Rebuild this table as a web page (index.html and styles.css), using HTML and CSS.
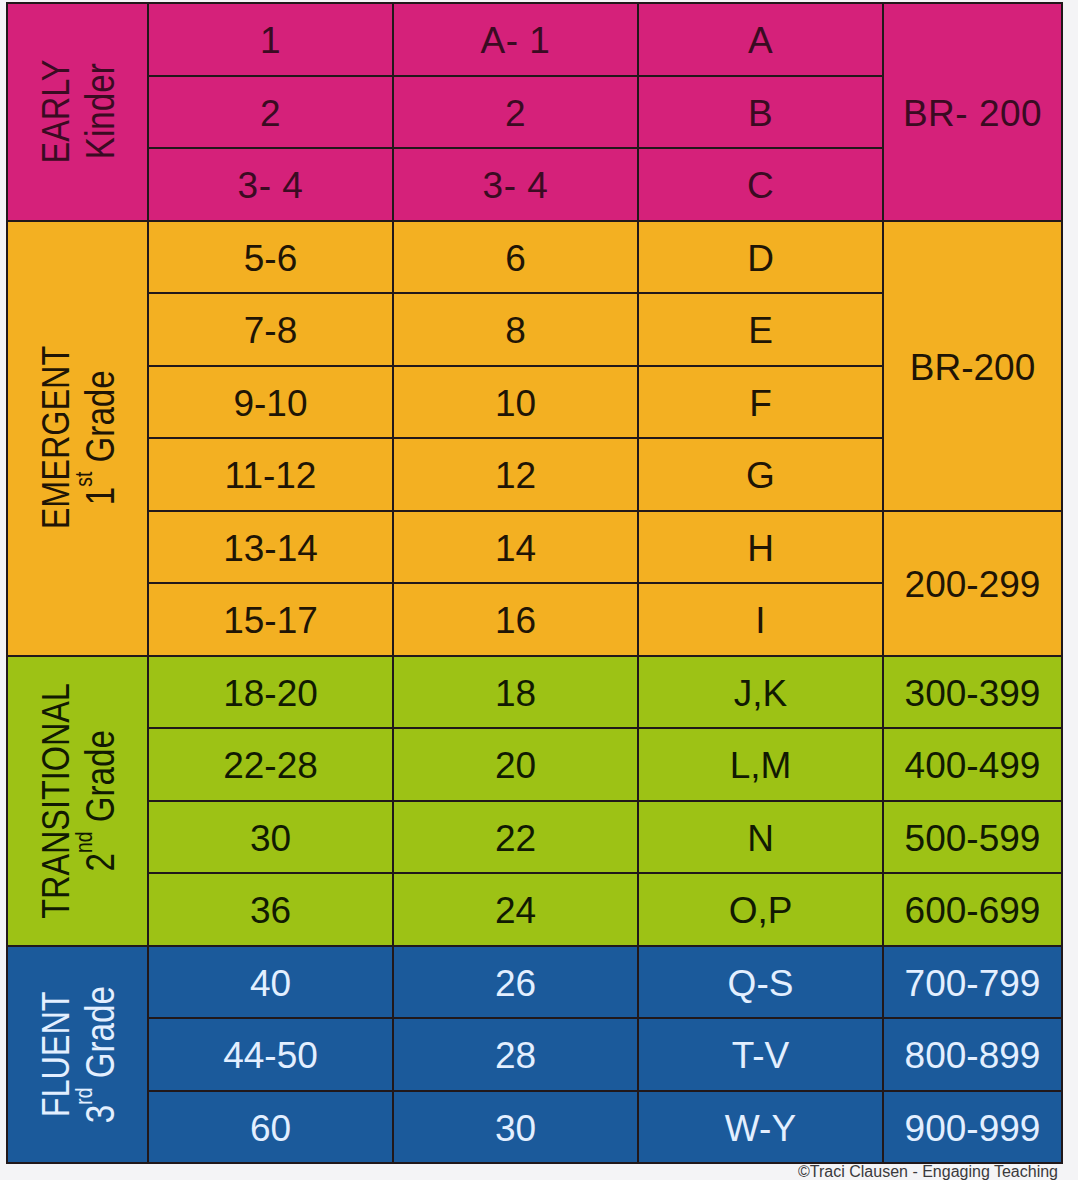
FILE: index.html
```html
<!DOCTYPE html>
<html lang="en">
<head>
<meta charset="utf-8">
<title>Reading Level Chart</title>
<link rel="stylesheet" href="styles.css">
</head>
<body>
<div class="chart">
  <div class="c label pink" style="grid-row: span 3"><div class="vt"><span class="main">EARLY</span><span class="sub">Kinder</span></div></div>
  <div class="c pink">1</div><div class="c pink">A- 1</div><div class="c pink">A</div>
  <div class="c pink" style="grid-row: span 3">BR- 200</div>
  <div class="c pink">2</div><div class="c pink">2</div><div class="c pink">B</div>
  <div class="c pink">3- 4</div><div class="c pink">3- 4</div><div class="c pink">C</div>

  <div class="c label orange" style="grid-row: span 6"><div class="vt"><span class="main">EMERGENT</span><span class="sub">1<sup>st</sup> Grade</span></div></div>
  <div class="c orange">5-6</div><div class="c orange">6</div><div class="c orange">D</div>
  <div class="c orange" style="grid-row: span 4">BR-200</div>
  <div class="c orange">7-8</div><div class="c orange">8</div><div class="c orange">E</div>
  <div class="c orange">9-10</div><div class="c orange">10</div><div class="c orange">F</div>
  <div class="c orange">11-12</div><div class="c orange">12</div><div class="c orange">G</div>
  <div class="c orange">13-14</div><div class="c orange">14</div><div class="c orange">H</div>
  <div class="c orange" style="grid-row: span 2">200-299</div>
  <div class="c orange">15-17</div><div class="c orange">16</div><div class="c orange">I</div>

  <div class="c label green" style="grid-row: span 4"><div class="vt"><span class="main">TRANSITIONAL</span><span class="sub">2<sup>nd</sup> Grade</span></div></div>
  <div class="c green">18-20</div><div class="c green">18</div><div class="c green">J,K</div><div class="c green">300-399</div>
  <div class="c green">22-28</div><div class="c green">20</div><div class="c green">L,M</div><div class="c green">400-499</div>
  <div class="c green">30</div><div class="c green">22</div><div class="c green">N</div><div class="c green">500-599</div>
  <div class="c green">36</div><div class="c green">24</div><div class="c green">O,P</div><div class="c green">600-699</div>

  <div class="c label blue" style="grid-row: span 3"><div class="vt"><span class="main">FLUENT</span><span class="sub">3<sup>rd</sup> Grade</span></div></div>
  <div class="c blue">40</div><div class="c blue">26</div><div class="c blue">Q-S</div><div class="c blue">700-799</div>
  <div class="c blue">44-50</div><div class="c blue">28</div><div class="c blue">T-V</div><div class="c blue">800-899</div>
  <div class="c blue">60</div><div class="c blue">30</div><div class="c blue">W-Y</div><div class="c blue">900-999</div>
</div>
<div class="credit">©Traci Clausen - Engaging Teaching</div>
</body>
</html>
```

FILE: styles.css
```css
html, body {
  margin: 0;
  padding: 0;
}
body {
  background: #f4f4f6;
  font-family: "Liberation Sans", Arial, sans-serif;
  width: 1078px;
  height: 1180px;
  overflow: hidden;
}
.chart {
  margin: 2px 0 0 6px;
  width: 1057px;
  height: 1162px;
  box-sizing: border-box;
  padding: 2px;
  background: #21181a;
  display: grid;
  grid-template-columns: 139px 243px 243px 243px 177px;
  grid-template-rows: repeat(16, 1fr);
  gap: 2px;
}
.c {
  display: flex;
  align-items: center;
  justify-content: center;
  font-size: 37px;
  line-height: 1;
  padding-top: 3px;
}
.pink {
  background: #d5217a;
  color: #3a0b22;
  letter-spacing: 0.5px;
}
.orange {
  background: #f3b022;
  color: #1f1505;
}
.green {
  background: #9dc215;
  color: #111a02;
}
.blue {
  background: #1b5a9b;
  color: #e3efff;
}
.label {
  padding-top: 0;
}
.vt {
  writing-mode: vertical-rl;
  transform: rotate(180deg) scaleY(0.83);
  text-align: center;
  font-size: 39px;
  line-height: 44px;
  white-space: nowrap;
  letter-spacing: 0;
}
.vt .main,
.vt .sub {
  display: block;
}
.vt .sub {
  font-size: 40px;
}
.vt sup {
  font-size: 0.58em;
  line-height: 0;
  vertical-align: 0.7em;
}
.credit {
  width: 1058px;
  margin-top: 0;
  text-align: right;
  font-size: 16px;
  line-height: 16px;
  color: #3a3a3c;
  letter-spacing: 0;
}
```
